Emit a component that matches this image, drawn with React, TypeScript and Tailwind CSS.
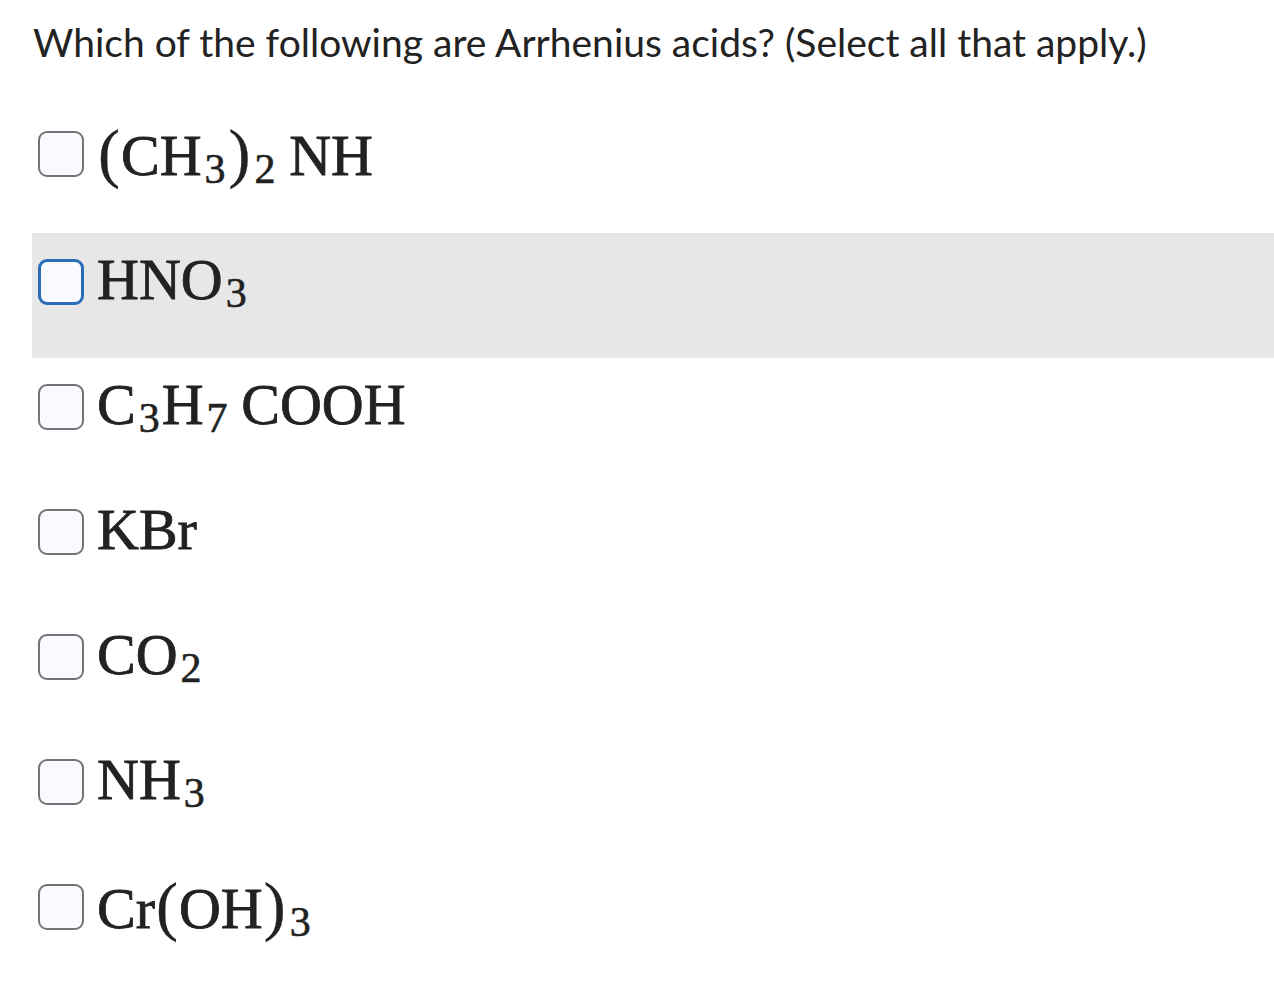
import React from "react";

type Part = { t: string; k?: "sub" | "p" };

const rows: { parts: Part[]; hl?: boolean; pt: string }[] = [
  {
    parts: [{ t: "(", k: "p" }, { t: "CH" }, { t: "3", k: "sub" }, { t: ")", k: "p" }, { t: "2", k: "sub" }, { t: "\u2009NH" }],
    pt: "pt-[12px]",
  },
  { parts: [{ t: "HNO" }, { t: "3", k: "sub" }], hl: true, pt: "pt-[15px]" },
  {
    parts: [{ t: "C" }, { t: "3", k: "sub" }, { t: "H" }, { t: "7", k: "sub" }, { t: "\u2009COOH" }],
    pt: "pt-[15px]",
  },
  { parts: [{ t: "KBr" }], pt: "pt-[15px]" },
  { parts: [{ t: "CO" }, { t: "2", k: "sub" }], pt: "pt-[15px]" },
  { parts: [{ t: "NH" }, { t: "3", k: "sub" }], pt: "pt-[15px]" },
  {
    parts: [{ t: "Cr" }, { t: "(", k: "p" }, { t: "OH" }, { t: ")", k: "p" }, { t: "3", k: "sub" }],
    pt: "pt-[15px]",
  },
];

export default function App() {
  return (
    <div className="min-h-screen w-full bg-white pl-8 pt-[19px]">
      <h1 className="pl-px text-[39px] leading-[1.2] text-[#222222] font-['Lato',sans-serif] font-normal">
        Which of the following are Arrhenius acids? (Select all that apply.)
      </h1>
      <div className="mt-[42px] flex flex-col">
        {rows.map((r, i) => (
          <div
            key={i}
            className={`flex h-[125px] items-start gap-[13px] pl-1.5 ${r.pt} ${r.hl ? "bg-[#e7e7e7]" : ""}`}
          >
            <div
              className={`mt-[11px] h-[46px] w-[46px] shrink-0 rounded-[9px] bg-[#f8faff] ${
                r.hl ? "border-[3px] border-[#2b6cb8]" : "border-2 border-[#727476]"
              }`}
            />
            <div className="whitespace-pre text-[58px] leading-[64px] text-[#222222] font-['Liberation_Serif',serif] [-webkit-text-stroke:0.8px_#222222]">
              {r.parts.map((p, j) =>
                p.k === "sub" ? (
                  <span
                    key={j}
                    className="ml-[3px] mr-[2px] text-[42px] leading-none align-[-8px] font-['Liberation_Serif',serif] [-webkit-text-stroke:0.6px_#222222]"
                  >
                    {p.t}
                  </span>
                ) : p.k === "p" ? (
                  <span
                    key={j}
                    className="mx-px text-[66px] leading-none font-['Liberation_Serif',serif] [-webkit-text-stroke:0.3px_#222222]"
                  >
                    {p.t}
                  </span>
                ) : (
                  <span key={j}>{p.t}</span>
                )
              )}
            </div>
          </div>
        ))}
      </div>
    </div>
  );
}
